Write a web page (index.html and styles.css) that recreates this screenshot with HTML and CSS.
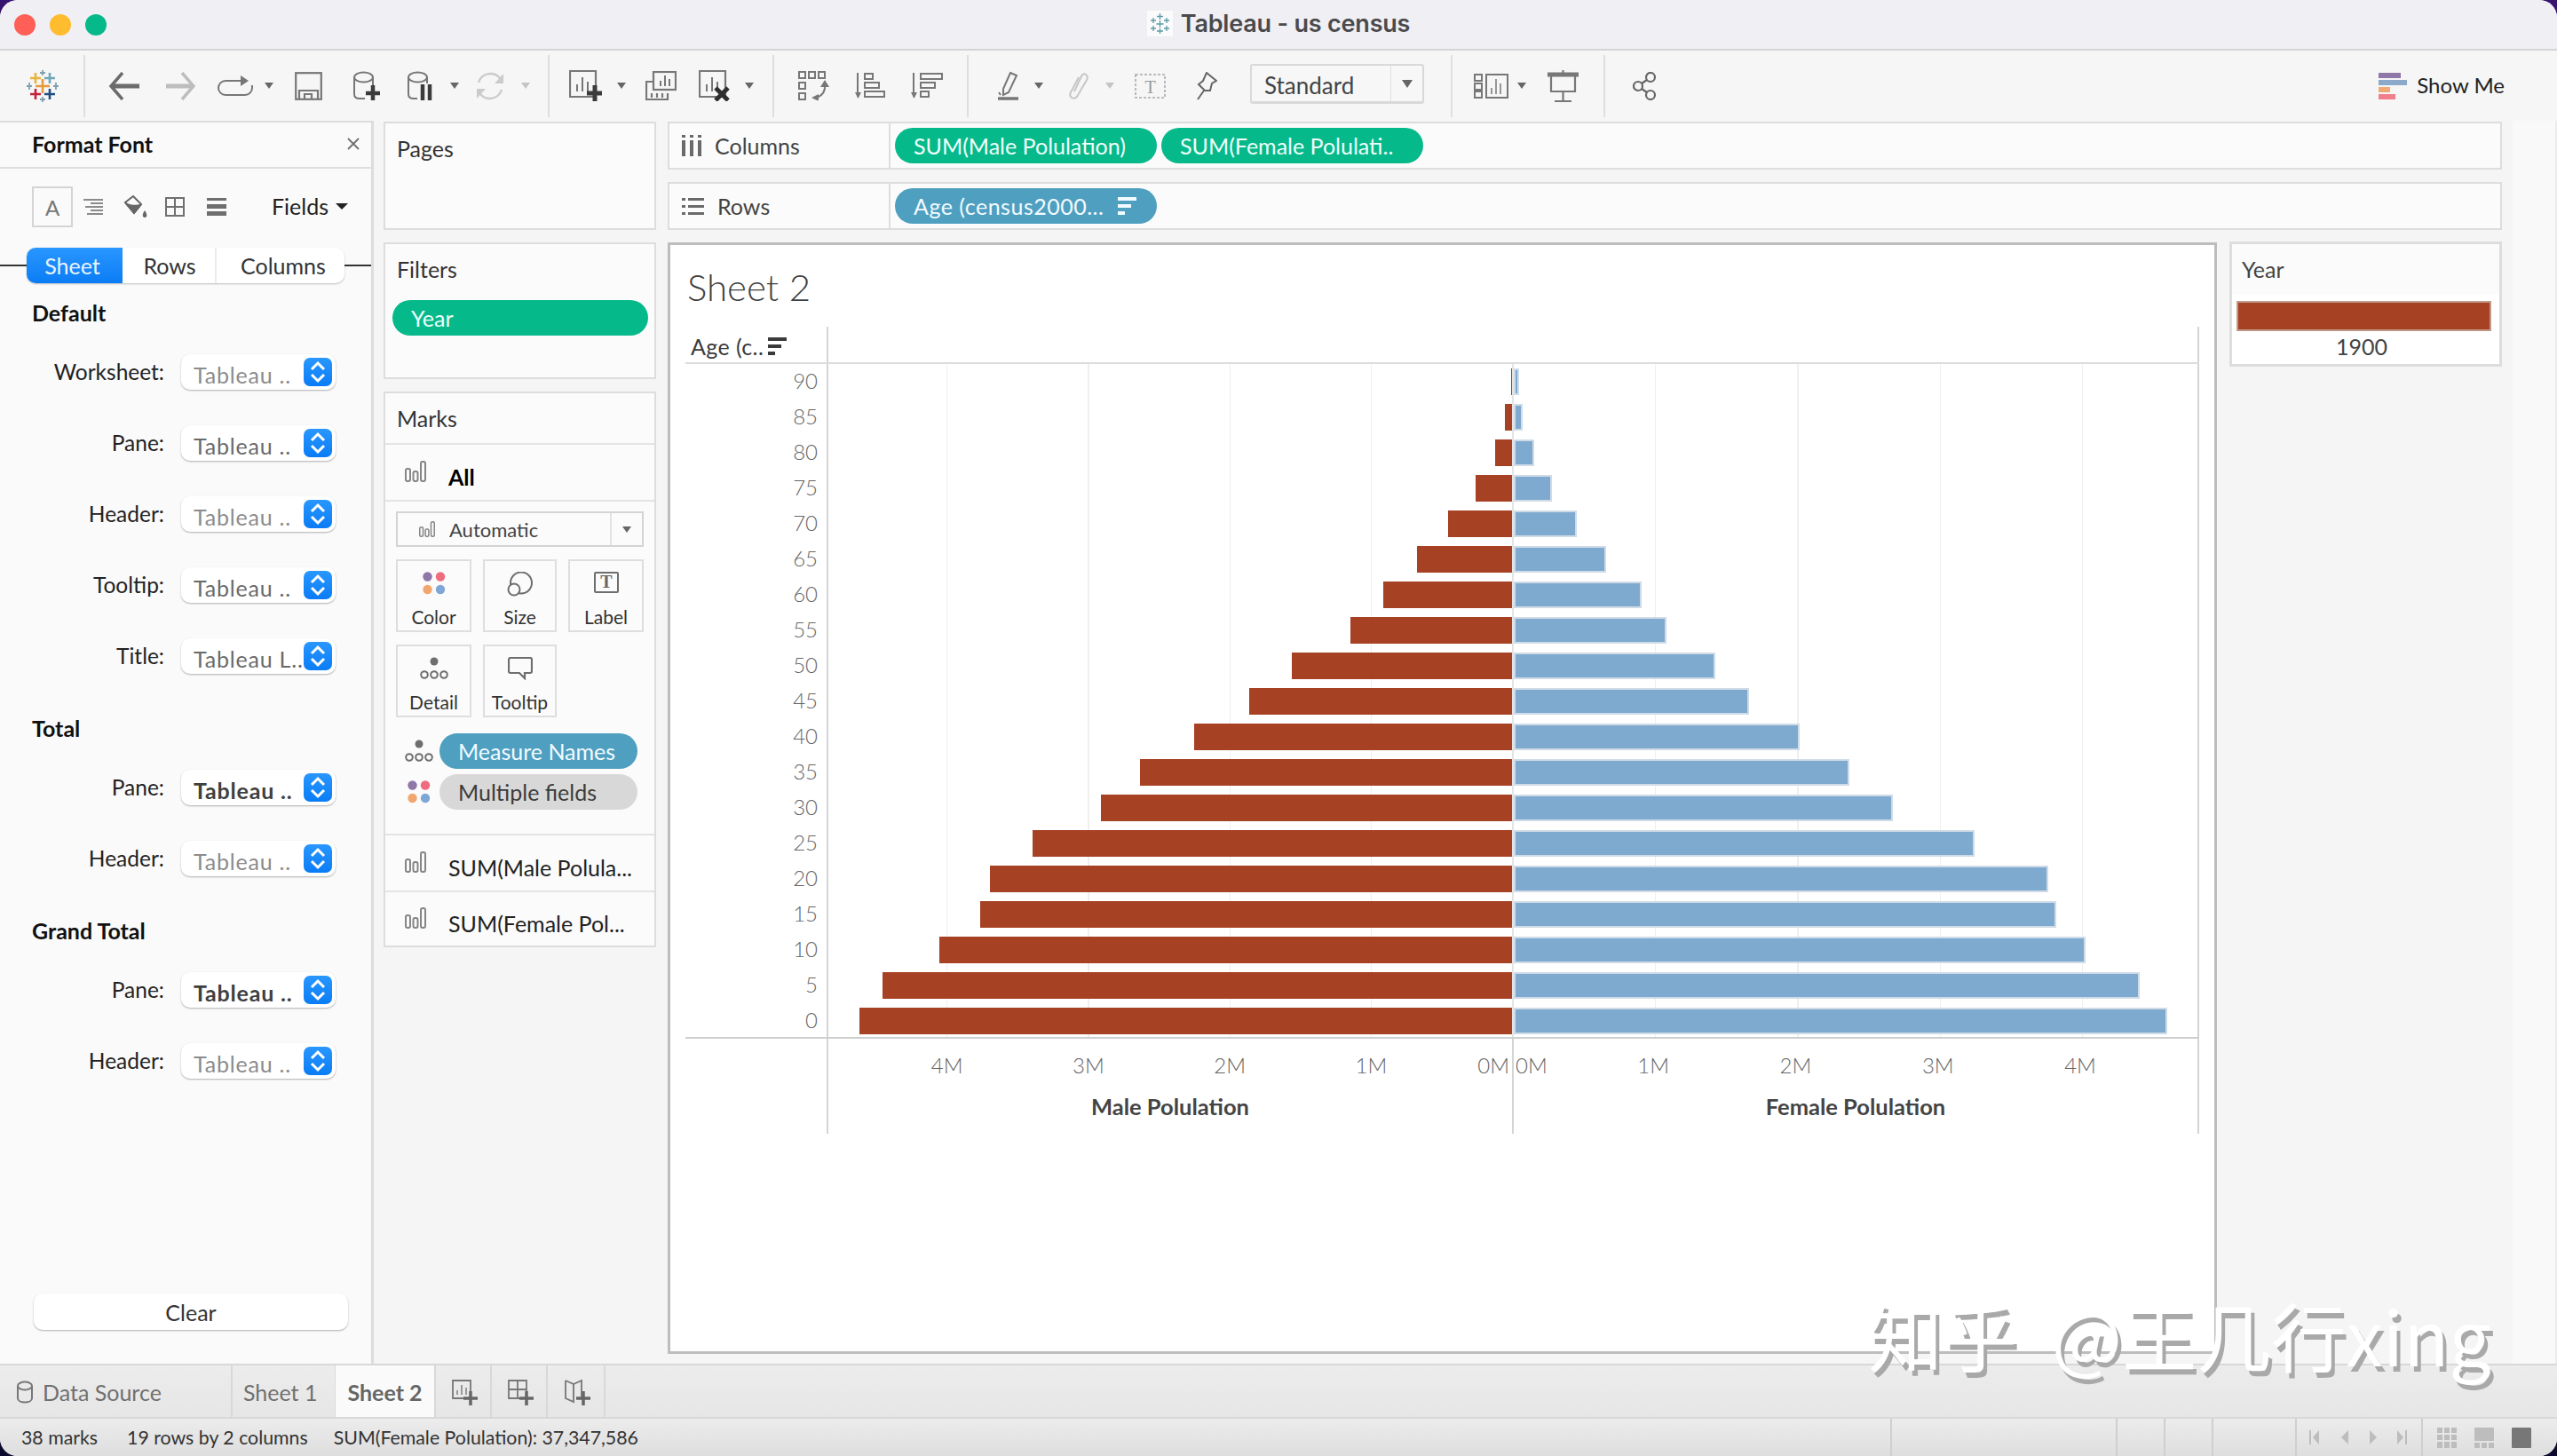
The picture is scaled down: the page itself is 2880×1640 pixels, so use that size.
FILE: index.html
```html
<!DOCTYPE html>
<html lang="en">
<head>
<meta charset="utf-8">
<title>Tableau - us census</title>
<link rel="stylesheet" href="styles.css">
</head>
<body>
<svg class="defs" xmlns="http://www.w3.org/2000/svg">
  <symbol id="bars" viewBox="0 0 24 24"><g fill="none" stroke="#858585" stroke-width="2"><rect x="1" y="9" width="5" height="14" rx="2"/><rect x="9.5" y="12" width="5" height="11" rx="2"/><rect x="18" y="1" width="5" height="22" rx="2"/></g></symbol>
  <symbol id="chev" viewBox="0 0 32 32"><path d="M9 13 16 6l7 7M9 19l7 7 7-7" fill="none" stroke="#fff" stroke-width="3"/></symbol>
  <symbol id="dots" viewBox="0 0 26 26"><circle cx="5.5" cy="5.5" r="5.2" fill="#8f77a8"/><circle cx="20" cy="5.5" r="5.2" fill="#ef6b7e"/><circle cx="5.5" cy="20" r="5.2" fill="#f2a66f"/><circle cx="20" cy="20" r="5.2" fill="#7fa7d6"/></symbol>
  <symbol id="detail" viewBox="0 0 32 26"><circle cx="16" cy="5" r="4.5" fill="#6e6e6e"/><g fill="none" stroke="#6e6e6e" stroke-width="2"><circle cx="5" cy="20" r="3.8"/><circle cx="16" cy="20" r="3.8"/><circle cx="27" cy="20" r="3.8"/></g></symbol>
  <symbol id="sort" viewBox="0 0 21 20"><path d="M0 0h21v4H0zM0 8h15v4H0zM0 16h8v4H0z" fill="currentColor"/></symbol>
</svg>

<div class="app">
  <header class="titlebar">
    <div class="lights"><i class="light red"></i><i class="light amber"></i><i class="light green"></i></div>
    <svg class="doc-icon" width="29" height="29" viewBox="0 0 29 29"><rect width="29" height="29" fill="#fbfbfb"/><path d="M14.5 3v7M11 6.500h7M14.500 11v8M10.500 15h8M14.500 20v6M11 23h7M7 8v6M4 11h6M22 8v6M19 11h6M7 17v6M4 20h6M22 17v6M19 20h6" stroke="#5c9aa8" stroke-width="1.300" fill="none"/></svg>
    <span class="title-text">Tableau - us census</span>
  </header>

  <div class="toolbar">
    <svg class="g0" width="36" height="36" viewBox="0 0 36 36" fill="none" stroke-width="2.600"><path d="M18 10v16M10 18h16" stroke="#e59b3a"/><path d="M10 3v12M4 9h12" stroke="#e9b33c"/><path d="M26 3v12M20 9h12" stroke="#6fa8b8"/><path d="M10 21v12M4 27h12" stroke="#c5203a"/><path d="M26 21v12M20 27h12" stroke="#1f4f80"/><path d="M18 0v6M15 3h6M18 30v6M15 33h6M3 14v8M0 18h6M33 14v8M30 18h6" stroke="#7f9fb0" stroke-width="1.800"/></svg>
    <i class="sep g28"></i>
    <svg class="g26" width="35" height="32" viewBox="0 0 35 32" fill="none" stroke="#6b6b6b"><path d="M16 1 3 16l13 15" stroke-width="3.500"/><path d="M3 16h32" stroke-width="5"/></svg>
    <svg class="g30" width="33" height="32" viewBox="0 0 33 32" fill="none" stroke="#bdbdbd"><path d="M18 1l13 15-13 15" stroke-width="3.500"/><path d="M30 16H0" stroke-width="5"/></svg>
    <svg class="g25" width="40" height="24" viewBox="0 0 40 24" fill="none" stroke="#777" stroke-width="2"><path d="M27 6H9a7.500 7.500 0 0 0 0 16h22a8 8 0 0 0 8-8v-3"/><path d="M26 0l9 6-9 6z" fill="#777" stroke="none"/></svg>
    <i class="caret g13"></i>
    <svg class="g23" width="31" height="32" viewBox="0 0 31 32" fill="none" stroke="#777" stroke-width="2.200"><rect x="1.200" y="1.200" width="28.600" height="29.600"/><path d="M5 31V21h21v10M11 31v-6h8v6"/></svg>
    <svg class="g35" width="30" height="33" viewBox="0 0 30 33" fill="none" stroke="#777" stroke-width="2"><ellipse cx="11.500" cy="7" rx="10.500" ry="5.500"/><path d="M1 7v19q0 5 6 5h6M22 7v12"/><path d="M22 16v17M14 25h16" stroke="#3c3c3c" stroke-width="4.500"/></svg>
    <svg class="g31" width="28" height="33" viewBox="0 0 28 33" fill="none" stroke="#777" stroke-width="2"><ellipse cx="11.500" cy="7" rx="10.500" ry="5.500"/><path d="M1 7v19q0 5 6 5h4M22 7v7"/><path d="M17 15v18M25 15v18" stroke="#3c3c3c" stroke-width="4.500"/></svg>
    <i class="caret g20"></i>
    <svg class="g18" width="32" height="32" viewBox="0 0 32 32" fill="none" stroke="#cbcbcb" stroke-width="2.400"><path d="M3 12A14 14 0 0 1 27 7M29 20A14 14 0 0 1 5 25"/><path d="M31 2v11H21zM1 30V19h10z" fill="#cbcbcb" stroke="none"/></svg>
    <i class="caret lite g19"></i>
    <i class="sep g19"></i>
    <svg class="g22" width="37" height="35" viewBox="0 0 37 35" fill="none" stroke="#777" stroke-width="2.200"><path d="M1 1h29v29H1z"/><path d="M9 24V16M15 24V8M21 24V13" stroke-width="2"/><path d="M29 17v18M20 26h17" stroke="#3c3c3c" stroke-width="5"/></svg>
    <i class="caret g17"></i>
    <svg class="g21" width="35" height="33" viewBox="0 0 35 33" fill="none" stroke="#777" stroke-width="2.200"><rect x="9" y="1" width="25" height="20"/><path d="M17 17v-6M22 17V5M27 17V9" stroke-width="2"/><path d="M9 12H1v20h24V25M7 30v-5M13 30v-5M19 30v-5"/></svg>
    <svg class="g25" width="35" height="35" viewBox="0 0 35 35" fill="none" stroke="#777" stroke-width="2.200"><path d="M1 1h29v29H1z"/><path d="M9 24V16M15 24V8M21 24V13" stroke-width="2"/><path d="M19 20l14 14M33 20 19 34" stroke="#2e2e2e" stroke-width="5"/></svg>
    <i class="caret g17"></i>
    <i class="sep g20"></i>
    <svg class="g27" width="35" height="33" viewBox="0 0 35 33" fill="none" stroke="#777" stroke-width="2"><rect x="1" y="1" width="7" height="7"/><rect x="12" y="1" width="7" height="7"/><rect x="23" y="1" width="7" height="7"/><rect x="1" y="13" width="7" height="7"/><rect x="1" y="25" width="7" height="7"/><path d="M30 16q1 10-9 14"/><path d="M30 10l5 8H25zM15 30l8-4v8z" fill="#777" stroke="none"/></svg>
    <svg class="g29" width="34" height="30" viewBox="0 0 34 30" fill="none" stroke="#777" stroke-width="2"><rect x="11" y="1" width="9" height="6"/><rect x="11" y="11" width="16" height="6"/><rect x="11" y="21" width="22" height="6"/><path d="M3 0v27"/><path d="M0 22h7l-3.500 7z" fill="#777" stroke="none"/></svg>
    <svg class="g29" width="36" height="30" viewBox="0 0 36 30" fill="none" stroke="#777" stroke-width="2"><rect x="11" y="1" width="24" height="6"/><rect x="11" y="11" width="16" height="6"/><rect x="11" y="21" width="9" height="6"/><path d="M3 0v27"/><path d="M0 22h7l-3.500 7z" fill="#777" stroke="none"/></svg>
    <i class="sep g27"></i>
    <svg class="g33" width="23" height="33" viewBox="0 0 23 33" fill="none" stroke="#777" stroke-width="2"><path d="M14 2l7 3-9 19-6 3 0-7z"/><path d="M1 24l2 3"/><path d="M0 31h23" stroke-width="3.500"/></svg>
    <i class="caret g18"></i>
    <svg class="g26" width="24" height="31" viewBox="0 0 24 31" fill="none" stroke="#c6c6c6" stroke-width="2"><path d="M8 22 16 5q2-4 5-2t1 6L11 28q-3 3-6 1t-1-6L13 6"/></svg>
    <i class="caret lite g19"></i>
    <svg class="g22" width="35" height="28" viewBox="0 0 35 28"><rect x="1" y="1" width="33" height="26" fill="none" stroke="#a9a9a9" stroke-width="1.600" stroke-dasharray="3 2"/><text x="17.500" y="22" text-anchor="middle" class="t-glyph">T</text></svg>
    <svg class="g33" width="25" height="32" viewBox="0 0 25 32" fill="none" stroke="#666" stroke-width="2"><path d="M13 1l11 9-5 3-2 8-6 0-7-7 5-4zM10 21 3 31"/></svg>
    <div class="std g37"><span class="std-label">Standard</span><span class="std-drop"><i class="caret big"></i></span></div>
    <i class="sep g30"></i>
    <svg class="g24" width="39" height="28" viewBox="0 0 39 28" fill="none" stroke="#777" stroke-width="2"><rect x="1" y="1" width="8" height="7"/><rect x="1" y="11" width="8" height="7"/><rect x="1" y="20" width="8" height="7"/><rect x="14" y="1" width="24" height="26"/><path d="M20 23v-7M25 23V6M30 23V11" stroke-width="1.500"/></svg>
    <i class="caret g10"></i>
    <svg class="g23" width="35" height="36" viewBox="0 0 35 36" fill="none" stroke="#777" stroke-width="2.200"><path d="M0 5h35" stroke-width="5"/><path d="M17.500 0v3M4 7v17h27V7M17.500 24v10M8 35h19"/></svg>
    <i class="sep g28"></i>
    <svg class="g31" width="27" height="32" viewBox="0 0 27 32" fill="none" stroke="#666" stroke-width="2.200"><circle cx="20" cy="6" r="5"/><circle cx="6" cy="16" r="5"/><circle cx="20" cy="26" r="5"/><path d="M16 9l-6 4M10 19l6 4"/></svg>
    <div class="showme">
      <svg width="32" height="30" viewBox="0 0 32 30"><rect width="25" height="6" fill="#8f77a8"/><rect y="8" width="32" height="6" fill="#8baacb"/><rect y="16" width="13" height="6" fill="#f0a875"/><rect y="24" width="19" height="6" fill="#f07f8a"/></svg>
      <span>Show Me</span>
    </div>
  </div>

  <div class="workspace">
    <aside class="format">
      <div class="format-head"><span>Format Font</span><svg width="14" height="14" viewBox="0 0 14 14"><path d="M1 1l12 12M13 1 1 13" stroke="#707070" stroke-width="1.800"/></svg></div>
      <div class="format-tools">
        <span class="font-btn">A</span>
        <svg class="f14" width="22" height="20" viewBox="0 0 22 20" stroke="#666" stroke-width="1.600"><path d="M0 2h22M8 6h14M2 10h20M8 14h14M4 18h18"/></svg>
        <svg class="f15" width="28" height="26" viewBox="0 0 28 26" fill="none" stroke="#666" stroke-width="2"><path d="M3 8l9-7 9 9-8 10z" fill="none"/><path d="M3 8c3 4 14 5 18 2l-8 10z" fill="#666"/><path d="M25 17c-3 4-3 8 0 8s3-4 0-8z" fill="#666" stroke="none"/></svg>
        <svg class="f16" width="22" height="22" viewBox="0 0 22 22" fill="none" stroke="#707070" stroke-width="2"><path d="M1 1h20v20H1zM11 1v20M1 11h20"/></svg>
        <svg class="f24" width="22" height="20" viewBox="0 0 22 20" fill="#6e6e6e"><rect width="22" height="3"/><rect y="7" width="22" height="5"/><rect y="15" width="22" height="5"/></svg>
        <span class="fields">Fields<i class="caret fields-caret"></i></span>
      </div>
      <div class="seg-row">
        <i class="seg-line short"></i>
        <div class="seg"><span class="seg-item on">Sheet</span><span class="seg-item rows">Rows</span><span class="seg-item cols">Columns</span></div>
        <i class="seg-line"></i>
      </div>
      <h3 class="fmt-h first">Default</h3>
      <div class="fmt-row"><label>Worksheet:</label><div class="sel"><span class="v dim">Tableau ..</span><span class="step"><svg width="32" height="32"><use href="#chev"/></svg></span></div></div>
      <div class="fmt-row"><label>Pane:</label><div class="sel"><span class="v mid">Tableau ..</span><span class="step"><svg width="32" height="32"><use href="#chev"/></svg></span></div></div>
      <div class="fmt-row"><label>Header:</label><div class="sel"><span class="v dim">Tableau ..</span><span class="step"><svg width="32" height="32"><use href="#chev"/></svg></span></div></div>
      <div class="fmt-row"><label>Tooltip:</label><div class="sel"><span class="v mid">Tableau ..</span><span class="step"><svg width="32" height="32"><use href="#chev"/></svg></span></div></div>
      <div class="fmt-row"><label>Title:</label><div class="sel"><span class="v mid">Tableau L..</span><span class="step"><svg width="32" height="32"><use href="#chev"/></svg></span></div></div>
      <h3 class="fmt-h total">Total</h3>
      <div class="fmt-row"><label>Pane:</label><div class="sel"><span class="v strong">Tableau ..</span><span class="step"><svg width="32" height="32"><use href="#chev"/></svg></span></div></div>
      <div class="fmt-row"><label>Header:</label><div class="sel"><span class="v dim">Tableau ..</span><span class="step"><svg width="32" height="32"><use href="#chev"/></svg></span></div></div>
      <h3 class="fmt-h grand">Grand Total</h3>
      <div class="fmt-row"><label>Pane:</label><div class="sel"><span class="v strong">Tableau ..</span><span class="step"><svg width="32" height="32"><use href="#chev"/></svg></span></div></div>
      <div class="fmt-row"><label>Header:</label><div class="sel"><span class="v dim">Tableau ..</span><span class="step"><svg width="32" height="32"><use href="#chev"/></svg></span></div></div>
      <div class="clear-btn">Clear</div>
    </aside>

    <div class="cards">
      <section class="card pages"><h4>Pages</h4></section>
      <section class="card filters"><h4>Filters</h4><div class="pill green wide">Year</div></section>
      <section class="card marks">
        <h4 class="marks-h">Marks</h4>
        <div class="mark-row all"><svg width="24" height="24"><use href="#bars"/></svg><b>All</b></div>
        <div class="mark-body">
          <div class="auto"><svg width="18" height="18"><use href="#bars"/></svg><span>Automatic</span><span class="auto-drop"><i class="caret"></i></span></div>
          <div class="mark-grid">
            <div class="mk c1"><svg width="26" height="26"><use href="#dots"/></svg><span>Color</span></div>
            <div class="mk c2"><svg width="30" height="28" viewBox="0 0 30 28" fill="none" stroke="#6e6e6e" stroke-width="2"><circle cx="16" cy="12.500" r="12"/><circle cx="8" cy="20" r="6.500" fill="#fbfbfb"/></svg><span>Size</span></div>
            <div class="mk c3"><svg width="28" height="24" viewBox="0 0 28 24"><rect x="1" y="1" width="26" height="22" fill="none" stroke="#6e6e6e" stroke-width="2" rx="1"/><text x="14" y="18" text-anchor="middle" class="t-glyph dark">T</text></svg><span>Label</span></div>
            <div class="mk c1"><svg width="32" height="26"><use href="#detail"/></svg><span>Detail</span></div>
            <div class="mk c2"><svg width="28" height="26" viewBox="0 0 28 26" fill="none" stroke="#6e6e6e" stroke-width="2.200"><path d="M3 1h22a2 2 0 0 1 2 2v13a2 2 0 0 1-2 2h-6v6l-6-6H3a2 2 0 0 1-2-2V3a2 2 0 0 1 2-2z"/></svg><span>Tooltip</span></div>
          </div>
          <div class="enc first-enc"><svg width="32" height="26"><use href="#detail"/></svg><div class="pill blue enc-pill">Measure Names</div></div>
          <div class="enc"><svg class="enc-dots" width="26" height="26"><use href="#dots"/></svg><div class="pill grey enc-pill">Multiple fields</div></div>
        </div>
        <div class="mark-row sum"><svg width="24" height="24"><use href="#bars"/></svg><span>SUM(Male Polula...</span></div>
        <div class="mark-row sum"><svg width="24" height="24"><use href="#bars"/></svg><span>SUM(Female Pol...</span></div>
      </section>
    </div>

    <main class="main">
      <div class="shelf">
        <div class="shelf-name"><svg width="22" height="24" viewBox="0 0 22 24" fill="#6a6a6a"><path d="M0 0h4v3H0zM9 0h4v3H9zM18 0h4v3h-4zM0 6h4v18H0zM9 6h4v18H9zM18 6h4v18h-4z"/></svg><span>Columns</span></div>
        <div class="shelf-pills"><div class="pill green sp">SUM(Male Polulation)</div><div class="pill green sp">SUM(Female Polulati..</div></div>
      </div>
      <div class="shelf">
        <div class="shelf-name"><svg width="25" height="21" viewBox="0 0 25 21" fill="#6a6a6a"><path d="M0 1h4v3H0zM7 1h18v3H7zM0 9h4v3H0zM7 9h18v3H7zM0 17h4v3H0zM7 17h18v3H7z"/></svg><span>Rows</span></div>
        <div class="shelf-pills"><div class="pill blue sp age">Age (census2000...<svg class="pill-sort" width="21" height="20"><use href="#sort"/></svg></div></div>
      </div>
      <div class="stage">
        <section class="sheet">
          <h1 class="sheet-title">Sheet 2</h1>
          <div class="chart">
            <div class="chart-head"><div class="age-head">Age (c..<svg width="21" height="20"><use href="#sort"/></svg></div><div class="head-fill"></div></div>
            <div class="chart-rows" id="rows">
              <div class="r"><span class="lab">90</span><div class="m"><i class="bm" style="width:1px"></i></div><div class="f"><i class="bf" style="width:6px"></i></div></div>
              <div class="r"><span class="lab">85</span><div class="m"><i class="bm" style="width:8px"></i></div><div class="f"><i class="bf" style="width:10px"></i></div></div>
              <div class="r"><span class="lab">80</span><div class="m"><i class="bm" style="width:19px"></i></div><div class="f"><i class="bf" style="width:23px"></i></div></div>
              <div class="r"><span class="lab">75</span><div class="m"><i class="bm" style="width:41px"></i></div><div class="f"><i class="bf" style="width:43px"></i></div></div>
              <div class="r"><span class="lab">70</span><div class="m"><i class="bm" style="width:72px"></i></div><div class="f"><i class="bf" style="width:71px"></i></div></div>
              <div class="r"><span class="lab">65</span><div class="m"><i class="bm" style="width:107px"></i></div><div class="f"><i class="bf" style="width:104px"></i></div></div>
              <div class="r"><span class="lab">60</span><div class="m"><i class="bm" style="width:145px"></i></div><div class="f"><i class="bf" style="width:144px"></i></div></div>
              <div class="r"><span class="lab">55</span><div class="m"><i class="bm" style="width:182px"></i></div><div class="f"><i class="bf" style="width:172px"></i></div></div>
              <div class="r"><span class="lab">50</span><div class="m"><i class="bm" style="width:248px"></i></div><div class="f"><i class="bf" style="width:227px"></i></div></div>
              <div class="r"><span class="lab">45</span><div class="m"><i class="bm" style="width:296px"></i></div><div class="f"><i class="bf" style="width:265px"></i></div></div>
              <div class="r"><span class="lab">40</span><div class="m"><i class="bm" style="width:358px"></i></div><div class="f"><i class="bf" style="width:322px"></i></div></div>
              <div class="r"><span class="lab">35</span><div class="m"><i class="bm" style="width:419px"></i></div><div class="f"><i class="bf" style="width:378px"></i></div></div>
              <div class="r"><span class="lab">30</span><div class="m"><i class="bm" style="width:463px"></i></div><div class="f"><i class="bf" style="width:427px"></i></div></div>
              <div class="r"><span class="lab">25</span><div class="m"><i class="bm" style="width:540px"></i></div><div class="f"><i class="bf" style="width:519px"></i></div></div>
              <div class="r"><span class="lab">20</span><div class="m"><i class="bm" style="width:588px"></i></div><div class="f"><i class="bf" style="width:602px"></i></div></div>
              <div class="r"><span class="lab">15</span><div class="m"><i class="bm" style="width:599px"></i></div><div class="f"><i class="bf" style="width:611px"></i></div></div>
              <div class="r"><span class="lab">10</span><div class="m"><i class="bm" style="width:645px"></i></div><div class="f"><i class="bf" style="width:644px"></i></div></div>
              <div class="r"><span class="lab">5</span><div class="m"><i class="bm" style="width:709px"></i></div><div class="f"><i class="bf" style="width:705px"></i></div></div>
              <div class="r"><span class="lab">0</span><div class="m"><i class="bm" style="width:735px"></i></div><div class="f"><i class="bf" style="width:736px"></i></div></div>
            </div>
            <div class="axis">
              <div class="ax-spacer"></div>
              <div class="ax-m">
                <div class="ticks"><span class="tk">4M</span><span class="tk">3M</span><span class="tk">2M</span><span class="tk">1M</span><span class="tk0">0M</span></div>
                <div class="ax-title">Male Polulation</div>
              </div>
              <div class="ax-f">
                <div class="ticks"><span class="tk0">0M</span><span class="tk">1M</span><span class="tk">2M</span><span class="tk">3M</span><span class="tk">4M</span></div>
                <div class="ax-title">Female Polulation</div>
              </div>
            </div>
          </div>
        </section>
        <section class="legend">
          <h4 class="legend-h">Year</h4>
          <div class="swatch"></div>
          <div class="legend-v">1900</div>
        </section>
      </div>
    </main>
    <div class="side-strip"></div>
  </div>

  <nav class="tabs">
    <div class="tab source"><svg width="18" height="26" viewBox="0 0 18 26" fill="none" stroke="#777" stroke-width="2"><path d="M1 6v14c0 6 16 6 16 0V6"/><ellipse cx="9" cy="6" rx="8" ry="4.500"/></svg><span>Data Source</span></div>
    <div class="tab sheet1">Sheet 1</div>
    <div class="tab active">Sheet 2</div>
    <div class="tab add"><svg width="29" height="29" viewBox="0 0 29 29" fill="none" stroke="#777" stroke-width="1.800"><path d="M1 1h20v20H1z"/><path d="M6 17v-5M11 17V6M16 17V9" stroke-width="1.400"/><path d="M21 13v16M13 21h16" stroke="#666" stroke-width="3.500"/></svg></div>
    <div class="tab add"><svg width="29" height="29" viewBox="0 0 29 29" fill="none" stroke="#777" stroke-width="1.800"><path d="M1 1h20v20H1zM11 1v20M1 11h20"/><path d="M21 13v16M13 21h16" stroke="#666" stroke-width="3.500"/></svg></div>
    <div class="tab add last"><svg width="29" height="29" viewBox="0 0 29 29" fill="none" stroke="#777" stroke-width="1.800"><path d="M1 1l9 4 9-4v20M1 1v20l9 4V5"/><path d="M21 13v16M13 21h16" stroke="#666" stroke-width="3.500"/></svg></div>
  </nav>

  <footer class="status">
    <span class="s1">38 marks</span><span class="s2">19 rows by 2 columns</span><span class="s3">SUM(Female Polulation): 37,347,586</span>
    <div class="cells">
      <i class="cell w254"></i><i class="cell w54"></i><i class="cell w54"></i><i class="cell w94"></i>
      <div class="cell nav">
        <svg width="110" height="16" viewBox="0 0 110 16" fill="#bdbdbd"><path d="M0 0h2v16H0zM11 0v16L4 8zM44 0v16l-8-8zM68 0v16l8-8zM99 0v16l7-8zM108 0h2v16h-2z"/></svg>
      </div>
      <div class="cell views">
        <svg class="vw" width="22" height="23" viewBox="0 0 22 23" fill="#bdbdbd"><path d="M0 0h6v6H0zM8 0h6v6H8zM16 0h6v6h-6zM0 8h6v6H0zM8 8h6v6H8zM16 8h6v6h-6zM0 16h6v7H0zM8 16h6v7H8zM16 16h6v7h-6z"/></svg>
        <svg class="vw" width="22" height="23" viewBox="0 0 22 23" fill="#bdbdbd"><path d="M0 0h22v15H0zM0 17h6v6H0zM8 17h6v6H8zM16 17h6v6h-6z"/></svg>
        <svg class="vw" width="22" height="23" viewBox="0 0 22 23"><rect width="22" height="23" rx="1" fill="#777"/></svg>
      </div>
    </div>
  </footer>

  <div class="watermark">知乎 @王几行xing</div>
</div>
</body>
</html>
```
FILE: styles.css
```css
* { box-sizing: border-box; }
html, body { margin: 0; padding: 0; width: 2880px; height: 1640px; overflow: hidden; }
body { background: linear-gradient(#37126e, #0b0a2c); font-family: "Lato", "Noto Sans", sans-serif; color: #333; }
.defs { display: none; }
i { display: block; font-style: normal; }
h1, h3, h4 { margin: 0; font-weight: 400; }

.app { position: relative; width: 2880px; height: 1640px; border-radius: 20px; overflow: hidden; display: flex; flex-direction: column; background: #f5f5f5; }

/* title bar */
.titlebar { height: 57px; flex: none; background: #f0eff4; border-bottom: 2px solid #d4d4d6; display: flex; align-items: center; justify-content: center; position: relative; padding-bottom: 2px; }
.lights { position: absolute; left: 16px; top: 16px; display: flex; gap: 16px; }
.light { width: 24px; height: 24px; border-radius: 50%; }
.red { background: #fe5f57; }
.amber { background: #febc2e; }
.green { background: #28c840; }
.doc-icon { margin-right: 9px; }
.title-text { font-family: "Inter", sans-serif; font-weight: 600; font-size: 27px; color: #4a4a4c; letter-spacing: -.2px; }

/* toolbar */
.toolbar { height: 79px; flex: none; background: #f6f6f6; display: flex; align-items: center; padding: 0 59px 0 30px; }
.toolbar > svg, .toolbar > i, .toolbar > div { flex: none; }
.sep { width: 2px; height: 70px; background: #dedede; }
.caret { width: 0; height: 0; border-left: 5px solid transparent; border-right: 5px solid transparent; border-top: 7px solid #666; }
.toolbar > .caret { margin-right: 1px; }
.caret.lite { border-top-color: #c4c4c4; }
.caret.big { border-left-width: 6px; border-right-width: 6px; border-top-width: 9px; }
.g0 { margin-left: 0; }
.g10 { margin-left: 10px; }
.g13 { margin-left: 13px; }
.g17 { margin-left: 17px; }
.g18 { margin-left: 18px; }
.g19 { margin-left: 19px; }
.g20 { margin-left: 20px; }
.g21 { margin-left: 21px; }
.g22 { margin-left: 22px; }
.g23 { margin-left: 23px; }
.g24 { margin-left: 24px; }
.g25 { margin-left: 25px; }
.g26 { margin-left: 26px; }
.g27 { margin-left: 27px; }
.g28 { margin-left: 28px; }
.g29 { margin-left: 29px; }
.g30 { margin-left: 30px; }
.g31 { margin-left: 31px; }
.g33 { margin-left: 33px; }
.g35 { margin-left: 35px; }
.g37 { margin-left: 37px; }
.t-glyph { font-family: "Liberation Serif", serif; font-size: 20px; fill: #999; }
.t-glyph.dark { fill: #666; font-weight: 700; }
.std { width: 196px; height: 45px; margin-top: -4px; border: 2px solid #d9d9d9; border-bottom-width: 3px; border-radius: 3px; background: #f7f7f7; display: flex; align-items: stretch; font-size: 26px; color: #444; }
.std-label { width: 157px; padding: 3px 0 0 14px; border-right: 1px solid #e2e2e2; display: flex; align-items: center; }
.std-drop { flex: 1; display: flex; align-items: center; justify-content: center; }
.showme { margin-left: auto; display: flex; align-items: center; gap: 11px; font-size: 24px; color: #222; }
.showme span { margin-bottom: 2px; }

/* workspace */
.workspace { flex: none; height: 1402px; display: flex; border-bottom: 2px solid #d8d8d8; }

.format { width: 421px; flex: none; background: #fafafa; border: solid #dcdcdc; border-width: 2px 3px 0 0; display: flex; flex-direction: column; }
.format-head { height: 52px; flex: none; border-bottom: 2px solid #dedede; display: flex; align-items: center; justify-content: space-between; padding: 0 13px 2px 36px; font-size: 25px; font-weight: 700; color: #111; }
.format-tools { height: 46px; margin: 20px 0 0 36px; display: flex; align-items: center; flex: none; }
.font-btn { width: 46px; height: 46px; border: 2px solid #d4d4d4; display: flex; align-items: center; justify-content: center; font-size: 24px; color: #777; }
.f14 { margin-left: 12px; }
.f15 { margin-left: 22px; }
.f16 { margin-left: 20px; }
.f24 { margin-left: 25px; }
.fields { margin-left: 51px; padding-bottom: 2px; display: flex; align-items: center; font-size: 25px; color: #222; }
.fields-caret { margin-left: 8px; border-left-width: 7px; border-right-width: 7px; border-top-width: 7px; border-top-color: #222; }
.seg-row { margin-top: 23px; height: 40px; display: flex; align-items: center; flex: none; }
.seg-line { flex: 1; height: 2px; background: #333; }
.seg-line.short { flex: none; width: 30px; }
.seg { width: 358px; height: 40px; background: #fff; border-radius: 10px; box-shadow: 0 1px 2px rgba(0,0,0,.25); display: flex; overflow: hidden; font-size: 25px; color: #333; }
.seg-item { display: flex; align-items: center; justify-content: center; }
.seg-item.on { width: 108px; padding-right: 5px; background: linear-gradient(#2a97ff, #0a7cf5); color: #e9f4ff; }
.seg-item.rows { width: 106px; padding-left: 2px; border-right: 2px solid #ececec; }
.seg-item.cols { flex: 1; padding-left: 6px; }
.fmt-h { font-size: 25px; font-weight: 700; color: #111; padding-left: 36px; height: 32px; line-height: 32px; flex: none; }
.fmt-h.first { margin-top: 17px; margin-bottom: 31px; }
.fmt-h.total { margin-top: 45px; margin-bottom: 31px; }
.fmt-h.grand { margin-top: 45px; margin-bottom: 31px; }
.fmt-row { height: 40px; margin-bottom: 40px; display: flex; align-items: center; flex: none; }
.fmt-row:has(+ .fmt-h), .fmt-row:has(+ .clear-btn) { margin-bottom: 0; }
.fmt-row label { width: 185px; text-align: right; font-size: 24.500px; color: #222; margin-right: 19px; padding-bottom: 1px; }
.sel { width: 174px; height: 40px; background: #fff; border-radius: 10px; box-shadow: 0 1px 2px rgba(0,0,0,.3); display: flex; align-items: center; position: relative; padding-left: 14px; }
.v { font-size: 25px; padding-top: 6px; letter-spacing: .8px; white-space: nowrap; }
.v.dim { color: #8c8c8c; }
.v.mid { color: #6a6a6a; }
.v.strong { color: #3f3f3f; font-weight: 700; }
.step { position: absolute; right: 4px; top: 4px; width: 32px; height: 32px; border-radius: 7px; background: linear-gradient(#2a97ff, #0a7cf5); }
.step svg { display: block; }
.clear-btn { margin: auto 26px 38px 38px; height: 41px; flex: none; background: #fff; border-radius: 10px; box-shadow: 0 1px 2px rgba(0,0,0,.3); display: flex; align-items: center; justify-content: center; font-size: 25px; color: #333; }

.cards { width: 307px; margin: 1px 13px 0 11px; flex: none; display: flex; flex-direction: column; gap: 14px; }
.card { background: #fbfbfb; border: 2px solid #dddddd; }
.card h4 { font-size: 25px; color: #333; padding-left: 13px; }
.pages { height: 122px; padding-top: 13px; }
.filters { height: 154px; padding-top: 13px; }
.pill { border-radius: 20px; height: 40px; display: flex; align-items: center; font-size: 25px; padding-left: 21px; white-space: nowrap; }
.green { background: #06b98b; color: #f0fffa; }
.blue { background: #4f9fc0; color: #f2fbff; }
.grey { background: #d8d8d8; color: #3c3c3c; }
.wide { margin: 20px 7px 0 8px; }
.marks { height: 626px; display: flex; flex-direction: column; }
.card .marks-h { height: 58px; flex: none; padding-top: 13px; border-bottom: 2px solid #e4e4e4; }
.mark-row { height: 64px; flex: none; display: flex; align-items: center; padding-left: 22px; gap: 25px; font-size: 25px; color: #222; }
.mark-row:last-child { height: 62px; }
.mark-row svg { margin-bottom: 3px; flex: none; }
.mark-row span, .mark-row b { padding-top: 10px; }
.mark-row.all { border-bottom: 2px solid #e4e4e4; color: #000; }
.mark-row.sum { border-top: 2px solid #e4e4e4; }
.mark-body { flex: 1; padding: 11px 12px 0; }
.auto { height: 40px; border: 2px solid #d4d4d4; display: flex; align-items: center; font-size: 22px; color: #444; padding-left: 24px; }
.auto span:first-of-type { margin-left: 16px; }
.auto-drop { margin-left: auto; width: 36px; height: 100%; border-left: 2px solid #e2e2e2; display: flex; align-items: center; justify-content: center; }
.mark-grid { display: grid; grid-template-columns: 85px 83px 85px; column-gap: 13px; row-gap: 14px; margin: 14px 0 0 0; }
.mk { height: 82px; border: 2px solid #dedede; display: flex; flex-direction: column; align-items: center; justify-content: space-between; padding: 12px 0 3px; font-size: 21px; color: #333; }
.enc { display: flex; align-items: center; margin-top: 6px; padding-left: 10px; }
.first-enc { margin-top: 18px; }
.enc svg { flex: none; }
.enc-dots { margin: 0 3px; }
.enc-pill { width: 223px; margin-left: 7px; }

.main { width: 2066px; margin-top: 1px; flex: none; display: flex; flex-direction: column; gap: 14px; }
.shelf { height: 54px; flex: none; background: #fbfbfb; border: 2px solid #dddddd; display: flex; }
.shelf-name { width: 249px; flex: none; border-right: 2px solid #dddddd; display: flex; align-items: center; font-size: 25px; color: #444; padding-left: 14px; gap: 15px; }
.shelf-pills { display: flex; gap: 5px; padding: 5px 0 0 5px; }
.sp { width: 295px; }
.age { position: relative; letter-spacing: .5px; }
.pill-sort { position: absolute; left: 251px; top: 10px; color: #f2fbff; }
.stage { flex: none; display: flex; gap: 14px; align-items: flex-start; }
.sheet { width: 1745px; height: 1252px; background: #fff; border: 3px solid #bdbdbd; border-bottom-width: 3px; padding: 0 17px 0 17px; flex: none; }
.sheet-title { font-size: 42px; font-weight: 300; color: #3f3f3f; height: 92px; padding: 22px 0 0 2px; line-height: 50px; }
.chart { width: 1705px; }
.chart-head { height: 42px; display: flex; border-bottom: 2px solid #dcdcdc; }
.age-head { width: 161px; border-right: 2px solid #d4d4d4; display: flex; align-items: center; gap: 5px; padding: 3px 0 0 6px; font-size: 25px; letter-spacing: .4px; color: #3a3a3a; white-space: nowrap; }
.head-fill { flex: 1; border-right: 2px solid #d4d4d4; }
.r { height: 40px; display: flex; }
.r:last-child { height: 38px; }
.lab { width: 161px; border-right: 2px solid #d4d4d4; text-align: right; padding-right: 10px; font-size: 24px; font-weight: 300; color: #666; line-height: 38px; }
.m { width: 770px; height: 100%; padding-top: 5px; display: flex; justify-content: flex-end; background: repeating-linear-gradient(to left, transparent 0 158px, #efefef 158px 159.250px); }
.f { flex: 1; height: 100%; padding-top: 5px; border-left: 2px solid #e4e4e4; border-right: 2px solid #d4d4d4; background: repeating-linear-gradient(to right, transparent 0 159px, #efefef 159px 160.300px); }
.bm, .bf { height: 30px; }
.bm { background: #a74124; }
.bf { background: #7faad0; border: 2px solid #cfdbe7; }
.axis { height: 109px; display: flex; border-top: 2px solid #cfcfcf; }
.ax-spacer { width: 161px; border-right: 2px solid #d4d4d4; }
.ax-m { width: 770px; }
.ax-f { flex: 1; border-left: 2px solid #d4d4d4; border-right: 2px solid #d4d4d4; }
.ticks { display: flex; height: 58px; padding-top: 15px; font-size: 24px; font-weight: 300; color: #666; line-height: 30px; }
.ax-m .ticks { justify-content: flex-end; }
.tk { text-align: center; flex: none; }
.ax-m .tk { width: 159.250px; }
.ax-f .tk { width: 160.300px; }
.tk0 { flex: none; width: 79px; }
.ax-m .tk0 { text-align: right; padding-right: 3px; }
.ax-f .tk0 { width: 77px; padding-left: 2px; }
.ax-title { text-align: center; font-size: 25.500px; line-height: 30px; color: #444; font-weight: 700; margin-top: 3px; }
.legend { width: 307px; height: 141px; background: #fff; border: 3px solid #dddddd; margin-top: -1px; flex: none; }
.legend-h { height: 57px; background: #fbfbfb; font-size: 25px; color: #444; padding: 13px 0 0 11px; }
.swatch { height: 34px; margin: 7px 9px 0 5px; background: #a74124; border: 2px solid #c09a88; }
.legend-v { text-align: center; font-size: 25px; color: #444; margin-top: 2px; padding-right: 9px; }
.side-strip { width: 50px; margin-left: 12px; flex: none; background: #f9f9f9; border-right: 2px solid #ececec; }

/* tabs + status */
.tabs { height: 60px; flex: none; display: flex; background: linear-gradient(#ececec, #e6e6e6); font-size: 25px; color: #707070; border-bottom: 2px solid #d8d8d8; }
.tab { display: flex; align-items: center; border-right: 2px solid #d8d8d8; height: 100%; flex: none; padding-top: 2px; }
.source { width: 262px; padding-left: 19px; gap: 11px; }
.sheet1 { width: 115px; padding-left: 12px; border-right: 0; }
.active { width: 114px; background: #fafafa; justify-content: center; font-weight: 700; color: #666; border-left: 1px solid #dcdcdc; }
.add { width: 63px; justify-content: center; padding-left: 4px; }
.add.last { width: 65px; }
.status { height: 42px; flex: none; display: flex; align-items: center; background: linear-gradient(#ececec, #dedede); font-size: 21.300px; color: #333; position: relative; }
.s1 { margin-left: 24px; }
.s2 { margin-left: 33px; }
.s3 { margin-left: 29px; }
.cells { margin-left: auto; width: 751px; display: flex; height: 100%; }
.cell { height: 100%; border-left: 2px solid #cfcfcf; flex: none; display: flex; align-items: center; }
.w254 { width: 254px; }
.w54 { width: 54px; }
.w94 { width: 94px; }
.nav { width: 142px; padding-left: 14px; }
.views { flex: 1; gap: 20px; padding-left: 16px; }

.watermark { position: absolute; left: 2104px; top: 1443px; font-family: "Noto Sans CJK SC", "Noto Sans", sans-serif; font-size: 84px; word-spacing: 20px; line-height: 120px; color: #fff; text-shadow: 4px 6px 0 #a9a9a9; white-space: nowrap; }
```
